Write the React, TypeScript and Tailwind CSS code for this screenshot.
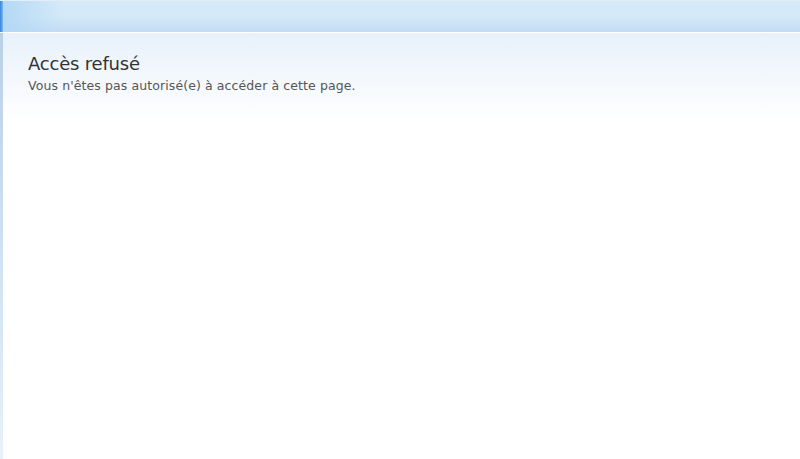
export default function App() {
  return (
    <div className="flex h-[459px] w-full flex-col overflow-hidden bg-white" style={{ fontFamily: '"DejaVu Sans", Verdana, sans-serif' }}>
      <div className="flex h-[32px] shrink-0 border-t border-[#e3edf7]">
        <div className="w-[3px] bg-gradient-to-r from-[#2f86dd] to-[#7db6ec]" />
        <div className="relative flex-1 bg-gradient-to-b from-[#d6eaf9] via-[#d3e9f8] to-[#c4dcf4]">
          <div className="absolute inset-y-0 left-0 w-[60px] bg-gradient-to-r from-[#b4d8f5] to-transparent" />
        </div>
      </div>
      <div className="h-px shrink-0 bg-white" />
      <div className="flex flex-1">
        <div className="w-[3px] bg-gradient-to-b from-[#b9d0e6] to-[#e6f1fb]" />
        <div className="flex-1 bg-gradient-to-b from-[#e8f1fa] to-white to-[90px] pl-[25px] pt-[20px]">
          <h1 className="text-[18px] leading-[22px] tracking-[-0.2px] text-[#333]">Accès refusé</h1>
          <p className="mt-[3px] text-[12.5px] leading-[15px] tracking-[0.1px] text-[#555]">Vous n'êtes pas autorisé(e) à accéder à cette page.</p>
        </div>
      </div>
    </div>
  );
}
